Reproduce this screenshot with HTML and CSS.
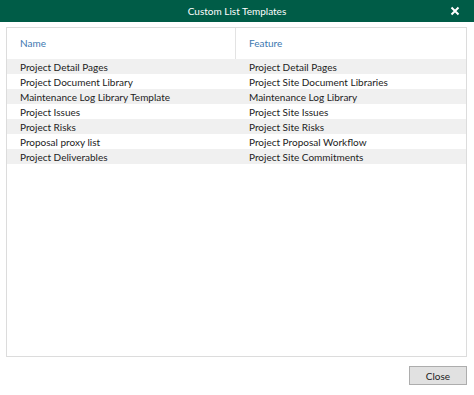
FILE: index.html
```html
<!DOCTYPE html>
<html lang="en">
<head>
    <meta charset="UTF-8">
    <title>Custom List Templates</title>
    <link rel="stylesheet" href="styles.css">
</head>
<body>
    <div class="window">
        <div class="titlebar">
            <span class="title">Custom List Templates</span>
            <span class="close-x">
                <svg width="10" height="10" viewBox="0 0 10 10">
                    <path d="M1.5 1.5 L8.5 8.5 M8.5 1.5 L1.5 8.5" stroke="#fff" stroke-width="2"/>
                </svg>
            </span>
        </div>
        <div class="content">
            <div class="grid">
                <div class="row head">
                    <div class="cell">Name</div>
                    <div class="cell">Feature</div>
                </div>
                <div class="row alt">
                    <div class="cell">Project Detail Pages</div>
                    <div class="cell">Project Detail Pages</div>
                </div>
                <div class="row">
                    <div class="cell">Project Document Library</div>
                    <div class="cell">Project Site Document Libraries</div>
                </div>
                <div class="row alt">
                    <div class="cell">Maintenance Log Library Template</div>
                    <div class="cell">Maintenance Log Library</div>
                </div>
                <div class="row">
                    <div class="cell">Project Issues</div>
                    <div class="cell">Project Site Issues</div>
                </div>
                <div class="row alt">
                    <div class="cell">Project Risks</div>
                    <div class="cell">Project Site Risks</div>
                </div>
                <div class="row">
                    <div class="cell">Proposal proxy list</div>
                    <div class="cell">Project Proposal Workflow</div>
                </div>
                <div class="row alt">
                    <div class="cell">Project Deliverables</div>
                    <div class="cell">Project Site Commitments</div>
                </div>
            </div>
            <div class="buttons">
                <button class="btn">Close</button>
            </div>
        </div>
    </div>
</body>
</html>
```
FILE: styles.css
```css
body {
    margin: 0;
    font-family: Lato, "Noto Sans", sans-serif;
    font-size: 10px;
    color: #222;
    background: #fff;
}
.window {
    width: 474px;
    height: 395px;
    display: flex;
    flex-direction: column;
}
.titlebar {
    height: 22px;
    background-color: #005c47;
    color: #fff;
    display: flex;
    align-items: center;
    justify-content: center;
    position: relative;
}
.title {
    font-size: 10px;
}
.close-x {
    position: absolute;
    right: 14px;
    top: 6px;
    line-height: 0;
}
.content {
    flex: 1;
    padding: 5px 7px 0 6px;
    display: flex;
    flex-direction: column;
}
.grid {
    height: 330px;
    box-sizing: border-box;
    border: 1px solid #dcdcdc;
}
.row {
    display: flex;
    height: 15px;
    align-items: center;
}
.row.alt {
    background-color: #f0f0f0;
}
.row.head {
    height: 31px;
    color: #3b78b0;
}
.cell {
    width: 229px;
    padding-left: 13px;
    box-sizing: border-box;
    white-space: nowrap;
}
.head .cell {
    height: 31px;
    line-height: 31px;
}
.head .cell:first-child {
    border-right: 1px solid #e3e3e3;
}
.buttons {
    display: flex;
    justify-content: flex-end;
    padding-top: 9px;
}
.btn {
    width: 58px;
    height: 19px;
    padding: 0;
    font-family: inherit;
    font-size: 10px;
    color: #222;
    background-color: #e1e1e1;
    border: 1px solid #adadad;
}
```
